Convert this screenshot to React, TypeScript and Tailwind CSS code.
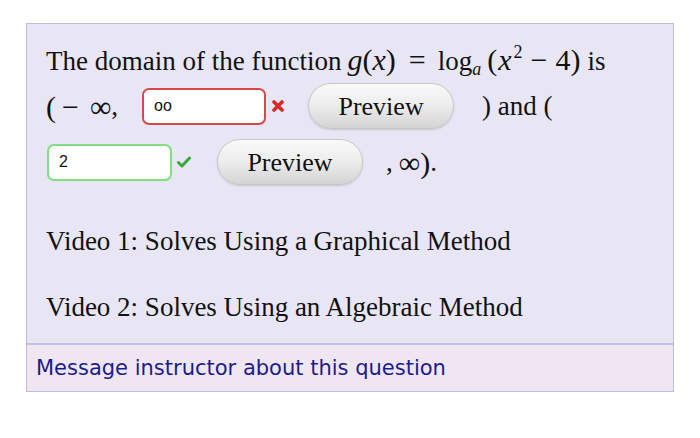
import React from "react";

function PreviewButton() {
  return (
    <button
      type="button"
      className="h-[46px] w-[146px] rounded-full border border-[#c8c8c8] bg-gradient-to-b from-[#fafafa] via-[#ececec] to-[#d4d4d4] text-[26px] text-[#111] shadow-[0_1px_2px_rgba(0,0,0,0.15)]"
      style={{ fontFamily: '"Liberation Serif", serif' }}
    >
      Preview
    </button>
  );
}

function Cross() {
  return (
    <svg width="12" height="12" viewBox="0 0 12 12" className="shrink-0">
      <path d="M2 2 L10 10 M10 2 L2 10" stroke="#d42a2a" strokeWidth="3.6" strokeLinecap="round" />
    </svg>
  );
}

function Check() {
  return (
    <svg width="14" height="12" viewBox="0 0 14 12" className="shrink-0">
      <path d="M1.5 6.5 L5 10 L12.5 2" fill="none" stroke="#3aa83a" strokeWidth="3" strokeLinecap="round" strokeLinejoin="round" />
    </svg>
  );
}

export default function App() {
  const serif = { fontFamily: '"Liberation Serif", "Times New Roman", serif' };
  const sans = { fontFamily: '"Liberation Sans", Arial, sans-serif' };
  return (
    <div className="min-h-[438px] w-[700px] bg-white pt-[23px] pl-[26px]">
      <div className="w-[648px] border border-[#bdbddb] bg-[#e8e6f4]">
        <div className="px-[19px] pt-[18px] pb-[21px] text-[27px] text-[#111]" style={serif}>
          {/* question text with inline math */}
          <div className="h-[36px] whitespace-nowrap leading-[36px]">
            <span>The domain of the function</span>
            <span className="ml-[6px] text-[30px] italic">g</span>
            <span className="text-[30px]">(</span>
            <span className="text-[30px] italic">x</span>
            <span className="text-[30px]">)</span>
            <span className="ml-[13px] text-[30px]">=</span>
            <span className="ml-[12px]">log</span>
            <sub className="text-[18px] italic">a</sub>
            <span className="ml-[6px] text-[30px]">(</span>
            <span className="ml-[1px] text-[30px] italic">x</span>
            <sup className="-top-[12px] ml-[2px] text-[18px]">2</sup>
            <span className="ml-[8px] text-[30px]">−</span>
            <span className="ml-[8px] text-[30px]">4</span>
            <span className="text-[30px]">)</span>
            <span className="ml-[7px]">is</span>
          </div>
          <div className="mt-[5px] flex h-[46px] items-center whitespace-nowrap">
            <span className="text-[30px]">(</span>
            <span className="ml-[6px] text-[30px]">−</span>
            <span className="ml-[11px] text-[30px]">∞</span>
            <span>,</span>
            <div className="ml-[24px] flex h-[37px] w-[124px] shrink-0 items-center rounded-[7px] border-2 border-[#d44a4a] bg-white px-[10px] text-[16px]" style={sans}>
              oo
            </div>
            <span className="ml-[6px]"><Cross /></span>
            <span className="ml-[24px]"><PreviewButton /></span>
            <span className="ml-[28px]">) and (</span>
          </div>
          <div className="mt-[10px] flex h-[46px] items-center whitespace-nowrap">
            <div className="ml-[1px] flex h-[37px] w-[125px] shrink-0 items-center rounded-[7px] border-2 border-[#7ee07e] bg-white px-[10px] text-[16px]" style={sans}>
              2
            </div>
            <span className="ml-[5px]"><Check /></span>
            <span className="ml-[26px]"><PreviewButton /></span>
            <span className="ml-[23px]">,</span>
            <span className="ml-[6px] text-[30px]">∞</span>
            <span className="text-[30px]">)</span>
            <span>.</span>
          </div>
          <div className="mt-[41px] leading-[30px]">Video 1: Solves Using a Graphical Method</div>
          <div className="mt-[36px] leading-[30px]">Video 2: Solves Using an Algebraic Method</div>
        </div>
        <div className="border-t-2 border-[#c4c2de] bg-[#f0e6f2] px-[9px] py-[10px] text-[21px] leading-[26px] text-[#1c1c8c]" style={{ fontFamily: '"DejaVu Sans", Verdana, sans-serif' }}>
          Message instructor about this question
        </div>
      </div>
    </div>
  );
}
